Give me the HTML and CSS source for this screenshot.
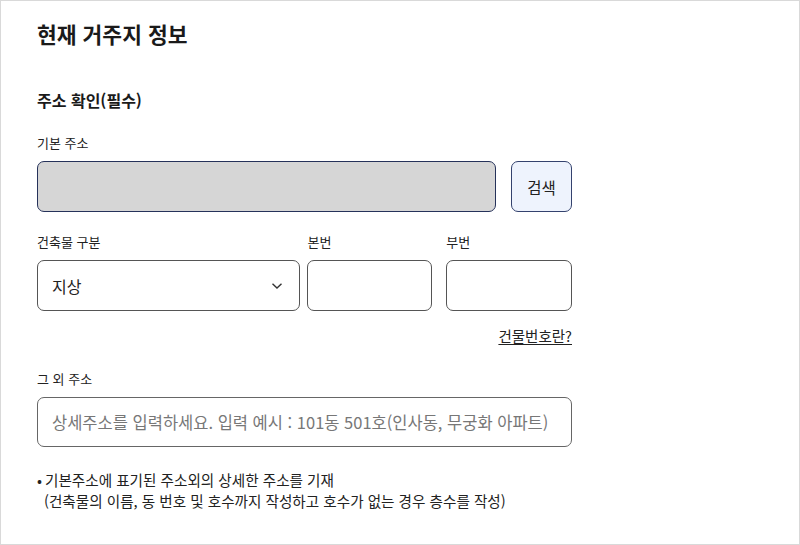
FILE: index.html
```html
<!DOCTYPE html>
<html lang="ko">
<head>
<meta charset="utf-8">
<title>현재 거주지 정보</title>
<link rel="stylesheet" href="styles.css">
</head>
<body>
<div class="page">
  <h1 class="title">현재 거주지 정보</h1>
  <h2 class="subtitle">주소 확인(필수)</h2>
  <div class="form">
    <label class="label">기본 주소</label>
    <div class="row-search">
      <div class="field field-disabled"></div>
      <button class="btn-search" type="button">검색</button>
    </div>
    <div class="row-building">
      <div class="col col-type">
        <label class="label label-top">건축물 구분</label>
        <div class="field field-select">
          <span>지상</span>
          <svg class="chev" width="12" height="8" viewBox="0 0 12 8"><path d="M1.5 1.8 L6 6 L10.5 1.8" fill="none" stroke="#333" stroke-width="1.4"/></svg>
        </div>
      </div>
      <div class="col col-num">
        <label class="label label-top">본번</label>
        <div class="field field-input"></div>
      </div>
      <div class="col col-num col-sub">
        <label class="label label-top">부번</label>
        <div class="field field-input"></div>
      </div>
    </div>
    <div class="help-row"><a class="help-link" href="#">건물번호란?</a></div>
    <label class="label label-extra">그 외 주소</label>
    <div class="field field-detail">상세주소를 입력하세요. 입력 예시 : 101동 501호(인사동, 무궁화 아파트)</div>
    <div class="note">
      <p class="note-line"><span class="bullet">•</span>기본주소에 표기된 주소외의 상세한 주소를 기재</p>
      <p class="note-line note-indent">(건축물의 이름, 동 번호 및 호수까지 작성하고 호수가 없는 경우 층수를 작성)</p>
    </div>
  </div>
</div>
</body>
</html>
```
FILE: styles.css
```css
* { box-sizing: border-box; }
html, body { margin: 0; padding: 0; background: #fff; }
body {
  font-family: "Noto Sans CJK KR", "Noto Sans", sans-serif;
  color: #222;
}
.page {
  width: 800px;
  height: 545px;
  border: 1px solid #d9d9d9;
  padding: 19px 36px 0 36px;
  overflow: hidden;
}
.title {
  margin: 0;
  font-size: 21.5px;
  line-height: 28px;
  font-weight: 700;
  color: #1a1a1a;
}
.subtitle {
  margin: 41px 0 0 0;
  font-size: 16px;
  line-height: 22px;
  font-weight: 700;
  color: #1a1a1a;
}
.form {
  width: 535px;
  display: flex;
  flex-direction: column;
}
.label {
  display: block;
  font-size: 13px;
  line-height: 18px;
  color: #222;
  margin-top: 23px;
  margin-bottom: 9px;
}
.label-top { margin-top: 0; }
.label-extra { margin-top: 25px; }
.row-search {
  display: flex;
  gap: 15px;
}
.field {
  height: 51px;
  border-radius: 7px;
  background: #fff;
}
.field-disabled {
  flex: 1;
  background: #d6d6d6;
  border: 1px solid #26325a;
}
.btn-search {
  width: 61px;
  height: 51px;
  border-radius: 7px;
  border: 1px solid #34426e;
  background: #eef3fd;
  font-family: inherit;
  font-size: 15.5px;
  color: #222;
  padding: 0;
}
.row-building {
  display: flex;
  gap: 7px;
  margin-top: 21px;
}
.col { display: flex; flex-direction: column; }
.col-type { width: 264px; }
.col-num { width: 125px; }
.col-sub { margin-left: 7px; width: 126px; }
.field-select {
  border: 1px solid #555;
  display: flex;
  align-items: center;
  justify-content: space-between;
  padding: 0 16px 0 14px;
  font-size: 16px;
  color: #222;
}
.chev { margin-top: 1px; }
.field-input {
  border: 1px solid #555;
}
.help-row {
  display: flex;
  justify-content: flex-end;
  margin-top: 16px;
}
.help-link {
  font-size: 14.5px;
  line-height: 18px;
  color: #222;
  text-decoration: underline;
  text-underline-offset: 2px;
}
.field-detail {
  height: 50px;
  border: 1px solid #666;
  display: flex;
  align-items: center;
  padding: 0 14px;
  font-size: 16.5px;
  color: #777;
  white-space: nowrap;
}
.note {
  margin-top: 22px;
}
.note-line {
  margin: 0;
  font-size: 14.6px;
  line-height: 21px;
  color: #222;
  white-space: nowrap;
}
.bullet { margin-right: 3px; }
.note-indent { padding-left: 7px; }
```
